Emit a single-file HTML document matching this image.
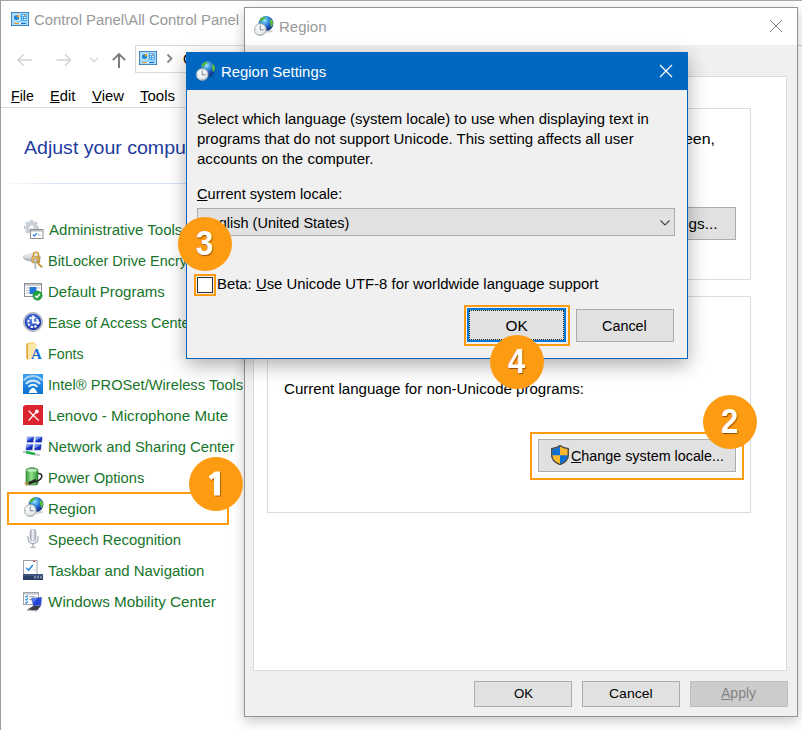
<!DOCTYPE html>
<html><head><meta charset="utf-8">
<style>
*{box-sizing:border-box;margin:0;padding:0}
html,body{width:802px;height:730px;overflow:hidden;background:#fff}
body{font-family:"Liberation Sans",sans-serif;position:relative;color:#000}
.a{position:absolute}
.t{position:absolute;white-space:pre;line-height:1;transform-origin:0 0}
.t u{text-decoration-thickness:1px;text-underline-offset:0.5px}
.layer{position:absolute;left:0;top:0;width:802px;height:730px;overflow:hidden;pointer-events:none}
.btn{position:absolute;border:1px solid #adadad;background:#e1e1e1}
.badge{position:absolute;width:54px;height:54px;border-radius:50%;background:#fd9b13;color:#fff;font-weight:bold;font-size:34.5px;text-align:center;line-height:53.2px;text-shadow:1px 1px 1px rgba(105,55,0,.75)}
.hl{position:absolute;border:2px solid #fd9b13}
.badge span{display:inline-block;transform:scaleX(.9)}
</style></head><body>
<!-- main window -->
<div class="a" style="left:0;top:0;width:802px;height:1px;background:#a6a6a6"></div>
<div class="a" style="left:0;top:0;width:1px;height:730px;background:#9c9c9c"></div>
<div class="a" style="left:1px;top:107px;width:243px;height:1px;background:#dcdcdc"></div>
<div class="a" style="left:1px;top:183px;width:243px;height:1px;background:linear-gradient(90deg,#fff 0,#d6e3f3 22%,#d6e3f3 100%)"></div>
<div class="a" style="left:135px;top:45px;width:120px;height:28px;border:1px solid #d9d9d9;background:#fff"></div>
<div class="a" style="left:790px;top:45px;width:12px;height:1px;background:#c9c9c9"></div>
<svg class="a" style="left:11px;top:12px" width="18" height="14" viewBox="0 0 18 14"><rect x=".5" y=".5" width="17" height="13" fill="#9bd6fc" stroke="#0c5ea3"/>
<rect x="1" y="1" width="16" height="12" fill="none" stroke="#c4e7fe" stroke-width=".6"/>
<circle cx="5.500" cy="5.600" r="3.400" fill="#e9f5fe"/>
<circle cx="5.500" cy="5.600" r="2.700" fill="#1e86d8"/>
<path d="M5.900 5.200V2.500A2.900 2.900 0 0 1 8.600 5.200z" fill="#f7a21b"/>
<rect x="10" y="2.300" width="5.700" height="6.500" fill="#3d9fe9"/>
<g fill="#fff"><rect x="11" y="3.200" width="3.800" height=".9"/><rect x="11" y="5.200" width="1" height=".9"/><rect x="13" y="5.200" width="1.800" height=".9"/><rect x="11" y="7.100" width="1" height=".9"/><rect x="13" y="7.100" width="1.800" height=".9"/></g>
<rect x="13" y="3.100" width="1.100" height="1.100" fill="#f47b16"/>
<rect x="3" y="11" width="5" height="1" fill="#f39a1a"/><rect x="8" y="11" width="2" height="1" fill="#fff"/><rect x="10" y="11" width="5" height="1" fill="#1669c9"/></svg>
<svg class="a" style="left:139.4px;top:51.2px" width="18" height="14" viewBox="0 0 18 14"><rect x=".5" y=".5" width="17" height="13" fill="#9bd6fc" stroke="#0c5ea3"/>
<rect x="1" y="1" width="16" height="12" fill="none" stroke="#c4e7fe" stroke-width=".6"/>
<circle cx="5.500" cy="5.600" r="3.400" fill="#e9f5fe"/>
<circle cx="5.500" cy="5.600" r="2.700" fill="#1e86d8"/>
<path d="M5.900 5.200V2.500A2.900 2.900 0 0 1 8.600 5.200z" fill="#f7a21b"/>
<rect x="10" y="2.300" width="5.700" height="6.500" fill="#3d9fe9"/>
<g fill="#fff"><rect x="11" y="3.200" width="3.800" height=".9"/><rect x="11" y="5.200" width="1" height=".9"/><rect x="13" y="5.200" width="1.800" height=".9"/><rect x="11" y="7.100" width="1" height=".9"/><rect x="13" y="7.100" width="1.800" height=".9"/></g>
<rect x="13" y="3.100" width="1.100" height="1.100" fill="#f47b16"/>
<rect x="3" y="11" width="5" height="1" fill="#f39a1a"/><rect x="8" y="11" width="2" height="1" fill="#fff"/><rect x="10" y="11" width="5" height="1" fill="#1669c9"/></svg>
<svg class="a" style="left:23.7px;top:220.2px" width="20" height="20" viewBox="0 0 20 20"><g fill="#cdd3da" stroke="#bfc6ce" stroke-width=".5"><circle cx="7.500" cy="7.500" r="5.200"/>
<g><rect x="6" y="0.300" width="3" height="3"/><rect x="6" y="11.700" width="3" height="3"/><rect x=".3" y="6" width="3" height="3"/><rect x="11.700" y="6" width="3" height="3"/>
<rect x="6" y=".3" width="3" height="3" transform="rotate(45 7.500 7.500)"/><rect x="6" y=".3" width="3" height="3" transform="rotate(135 7.500 7.500)"/><rect x="6" y=".3" width="3" height="3" transform="rotate(225 7.500 7.500)"/><rect x="6" y=".3" width="3" height="3" transform="rotate(315 7.500 7.500)"/></g></g>
<circle cx="7.500" cy="7.500" r="2.300" fill="#f3f5f7"/>
<rect x="6.500" y="9.500" width="12.500" height="9" fill="#fff" stroke="#8b8f94"/>
<rect x="7" y="10" width="11.500" height="1.600" fill="#b9bec4"/>
<path d="M9 14.500l1.400 1.500l2.400-2.900" fill="none" stroke="#2f8de4" stroke-width="1.300"/>
<rect x="13.800" y="14.300" width="3" height=".9" fill="#b0b5ba"/></svg>
<svg class="a" style="left:23.2px;top:250.5px" width="20" height="19" viewBox="0 0 20 19"><defs><linearGradient id="bl1" x1="0" y1="0" x2="0" y2="1"><stop offset="0" stop-color="#f4f5f6"/><stop offset="1" stop-color="#b4b8bc"/></linearGradient>
<linearGradient id="bl2" x1="0" y1="0" x2="1" y2="1"><stop offset="0" stop-color="#f3d37a"/><stop offset="1" stop-color="#b8862b"/></linearGradient></defs>
<ellipse cx="9" cy="6.500" rx="8.800" ry="3.400" fill="url(#bl1)" stroke="#b9bdc1" stroke-width=".5"/>
<path d="M.5 6.500c2 3 8 4 12 3.500" fill="none" stroke="#9aa0a5" stroke-width=".8"/>
<path d="M10.300 6V3.800a2.600 2.600 0 0 1 5.200 0V6" fill="none" stroke="#c89a3a" stroke-width="1.500"/>
<rect x="8.800" y="5.600" width="8" height="6.200" rx=".8" fill="url(#bl2)" stroke="#a87a25" stroke-width=".5"/>
<circle cx="12.500" cy="9.300" r="1.600" fill="#d7dadd" stroke="#8d9398" stroke-width=".5"/>
<path d="M12.400 10.500v7.500" stroke="#aeb3b8" stroke-width="1.700"/>
<path d="M14.500 10.500c.8 2.600 2.300 4.600 4.800 5.600" fill="none" stroke="#c69235" stroke-width="1.600"/></svg>
<svg class="a" style="left:24.2px;top:283px" width="19" height="17.5" viewBox="0 0 19 17.5"><rect x=".5" y=".5" width="17" height="13" fill="#fff" stroke="#8b9096"/>
<rect x="1" y="1" width="16" height="2" fill="#c9cdd2"/>
<rect x="2" y="4.500" width="3" height="1" fill="#b8bcc0"/><rect x="2" y="7" width="3" height="1" fill="#b8bcc0"/><rect x="2" y="9.500" width="3" height="1" fill="#b8bcc0"/>
<rect x="5.500" y="4" width="7" height="7" fill="#1f78d8"/>
<rect x="13" y="4.500" width="3.500" height="1" fill="#b8bcc0"/>
<circle cx="13.500" cy="12.600" r="4.600" fill="#21a33a" stroke="#17822c" stroke-width=".6"/>
<path d="M11.200 12.700l1.700 1.800l3-3.500" fill="none" stroke="#fff" stroke-width="1.500"/></svg>
<svg class="a" style="left:23.2px;top:312px" width="20" height="20" viewBox="0 0 20 20"><defs><radialGradient id="ea" cx="45%" cy="35%" r="70%"><stop offset="0" stop-color="#5f86e8"/><stop offset=".6" stop-color="#2a4fc4"/><stop offset="1" stop-color="#1a2f8f"/></radialGradient></defs>
<circle cx="10" cy="10" r="9.600" fill="#c5cad3" stroke="#8f96a3" stroke-width=".6"/>
<circle cx="10" cy="10" r="8.300" fill="url(#ea)"/>
<circle cx="10" cy="10.300" r="4.800" fill="none" stroke="#fff" stroke-width="2" stroke-dasharray="2.300 1.400"/>
<path d="M10 3.500v7h5.500" fill="none" stroke="#fff" stroke-width="1.800"/>
<path d="M14.800 8.600l2.200 1.900l-2.200 1.900z" fill="#fff"/></svg>
<svg class="a" style="left:25.8px;top:342.4px" width="18" height="19" viewBox="0 0 18 19"><path d="M.3 1.300L8 0v15L2 18z" fill="#f6d273"/>
<path d="M.3 1.300l1.700 1.500V18L.3 16.500z" fill="#e0a83a"/>
<path d="M2 2.800L10.500 1.200v13.300L2 18z" fill="#fce8a6"/>
<text x="5" y="16.800" font-family="Liberation Serif" font-weight="bold" font-size="15" fill="#1a70d6">A</text></svg>
<svg class="a" style="left:23.2px;top:374px" width="20" height="20" viewBox="0 0 20 20"><defs><linearGradient id="it" x1="0" y1="0" x2="0" y2="1"><stop offset="0" stop-color="#3a9ff0"/><stop offset="1" stop-color="#0b70cf"/></linearGradient></defs>
<rect width="20" height="20" fill="url(#it)"/>
<g fill="none" stroke="#fff" stroke-linecap="round"><path d="M1.300 5.800C5.800 .8 14.200 .8 18.700 5.800" stroke-width="2.200" opacity=".55"/><path d="M3.600 9.300C7 5.600 13 5.600 16.400 9.300" stroke-width="2.200" opacity=".8"/><path d="M6.300 12.300C8.300 10.300 11.700 10.300 13.700 12.300" stroke-width="2" opacity=".95"/></g>
<path d="M10 13.500c2 1 3.800 3 4.300 5.500h-8.600c.5-2.500 2.300-4.500 4.300-5.500z" fill="#fff"/></svg>
<svg class="a" style="left:23.2px;top:405px" width="20" height="20" viewBox="0 0 20 20"><path d="M3 0H20V20H0V3A3 3 0 0 1 3 0z" fill="#dc2431"/>
<path d="M5.600 5.800L15.800 15.600" stroke="#fff" stroke-width="1.300"/>
<path d="M5.600 15.600L12.600 7.800" stroke="#fff" stroke-width="1.300"/>
<circle cx="13.800" cy="6.500" r="1.900" fill="#fff"/></svg>
<svg class="a" style="left:23.2px;top:436px" width="20" height="20" viewBox="0 0 20 20"><defs><linearGradient id="nw" x1="0" y1="0" x2="1" y2="1"><stop offset="0" stop-color="#3a6cf0"/><stop offset=".5" stop-color="#1a38c8"/><stop offset="1" stop-color="#0a1780"/></linearGradient></defs>
<g transform="skewX(-7) translate(2.400 0)">
<g fill="url(#nw)" stroke="#e4eaf5" stroke-width=".8"><rect x="1.800" y=".4" width="7.200" height="6.400"/><rect x="10.200" y=".4" width="7.200" height="6.400"/><rect x="1.800" y="8" width="7.200" height="6.400"/><rect x="10.200" y="8" width="7.200" height="6.400"/></g>
<g fill="#a9c0ff" opacity=".6"><path d="M2.300 .9h6.200l-6.200 3.800z"/><path d="M10.700 .9h6.200l-6.200 3.800z"/><path d="M2.300 8.500h6.200l-6.200 3.800z"/><path d="M10.700 8.500h6.200l-6.200 3.800z"/></g>
</g>
<path d="M.8 15.800l15 3.300" stroke="#c5cad2" stroke-width="2.400" stroke-linecap="round"/>
<path d="M4 16.300l7 1.500" stroke="#1fb14a" stroke-width="2.600" stroke-linecap="round"/></svg>
<svg class="a" style="left:23.2px;top:466.5px" width="20" height="20" viewBox="0 0 20 20"><defs><linearGradient id="pw" x1="0" y1="0" x2="1" y2="0"><stop offset="0" stop-color="#3a9a3c"/><stop offset=".45" stop-color="#8fe08a"/><stop offset="1" stop-color="#2d8a32"/></linearGradient></defs>
<rect x="6.500" y="0" width="5" height="2" rx=".6" fill="#9aa3a0"/>
<rect x="3" y="1.500" width="12" height="16.500" rx="2" fill="url(#pw)" stroke="#2b7a30" stroke-width=".6"/>
<ellipse cx="9" cy="3.200" rx="5.400" ry="1.500" fill="#c6f3c2" opacity=".8"/>
<path d="M15 6.500c3.500-.5 5 2.500 2.500 5.500c-1.200 1.400-3 2.300-5 3" fill="none" stroke="#222" stroke-width="1.500"/>
<path d="M5 15.200l7.500-3.400l1.300 2.600l-7.500 3.600z" fill="#2a2a2a"/>
<path d="M1.300 16.500l3.800-1.500M2.300 18.600l3.800-1.600" stroke="#b98c3a" stroke-width="1.100"/></svg>
<svg class="a" style="left:24px;top:497px" width="20" height="20" viewBox="0 0 20 20"><defs><radialGradient id="gl1" cx="40%" cy="30%" r="75%"><stop offset="0" stop-color="#a6e6ff"/><stop offset=".3" stop-color="#43a3e6"/><stop offset=".65" stop-color="#1d55b8"/><stop offset="1" stop-color="#0f2a78"/></radialGradient>
<radialGradient id="ck1" cx="45%" cy="35%" r="70%"><stop offset="0" stop-color="#fff"/><stop offset=".7" stop-color="#e4e8ea"/><stop offset="1" stop-color="#aab0b4"/></radialGradient></defs>
<ellipse cx="13" cy="15.2" rx="6" ry="1.6" fill="#000" opacity=".18"/>
<circle cx="12" cy="7.4" r="7.4" fill="url(#gl1)"/>
<path d="M6.2 3.2c1.5-1.8 3.4-2.6 5-2.6c.8.9-.2 2-1.4 2.6c-1 .6-1.200 1.900-2.300 2.500c-1 .4-1.600-.3-1.900-1.200z" fill="#4fb83a"/>
<path d="M16.800 3c1.300.9 2.200 2.600 2.400 4.400c-.4 1.600-1.300 2.900-2 3.500c-.8-.9-.4-2.300-.9-3.400c-.5-1.200-.6-3.200.5-4.500z" fill="#59c03c"/>
<path d="M9 11.500c.9-.5 2.300 0 2.800.9c.3.900-.3 1.900-1 2.300c-1.200-.4-2-1.800-1.800-3.200z" fill="#3fa535"/>
<circle cx="6.200" cy="13.600" r="6" fill="url(#ck1)" stroke="#9aa0a5" stroke-width=".7"/>
<path d="M6.200 9.600v4.200h3.200" fill="none" stroke="#56627a" stroke-width=".8"/>
<g fill="#8a9096"><rect x="5.900" y="8.300" width=".6" height="1"/><rect x="5.900" y="18" width=".6" height="1"/><rect x="1" y="13.300" width="1" height=".6"/><rect x="10.600" y="13.300" width="1" height=".6"/></g></svg>
<svg class="a" style="left:27.1px;top:528.7px" width="12" height="19.5" viewBox="0 0 12 19.5"><defs><linearGradient id="sp" x1="0" y1="0" x2="1" y2="0"><stop offset="0" stop-color="#8f96a8"/><stop offset=".45" stop-color="#f5f6fa"/><stop offset="1" stop-color="#979eb0"/></linearGradient></defs>
<rect x="3" y="0" width="6" height="12.500" rx="3" fill="url(#sp)" stroke="#a9afbd" stroke-width=".5"/>
<path d="M1 7v2.500a5 5 0 0 0 10 0V7" fill="none" stroke="#9da3b1" stroke-width="1.100"/>
<path d="M6 14.500v3" stroke="#9da3b1" stroke-width="1.400"/>
<ellipse cx="6" cy="18.300" rx="3" ry=".9" fill="#b5bac6"/></svg>
<svg class="a" style="left:23.2px;top:560px" width="20" height="20" viewBox="0 0 20 20"><rect x=".5" y=".5" width="13.500" height="14" fill="#fff" stroke="#9da1a6"/>
<rect x="10" y="1" width="2.200" height="1" fill="#e0343c"/>
<path d="M3.200 7.800l2.400 2.400l4.200-5.200" fill="none" stroke="#1f82e0" stroke-width="1.500"/>
<rect x="10.300" y="9.500" width="2" height=".8" fill="#b4b8bc"/>
<rect x="0" y="14.200" width="20" height="5.800" fill="#2a3f63"/>
<rect x="0" y="14.200" width="20" height="2" fill="#3c5582"/>
<g fill="#8e9bb5"><rect x="11" y="16.300" width="2" height="2"/><rect x="14" y="16.300" width="2" height="2"/><rect x="17" y="16.300" width="2" height="2"/></g></svg>
<svg class="a" style="left:23.2px;top:591.5px" width="20" height="20" viewBox="0 0 20 20"><rect x=".5" y=".5" width="15" height="12" fill="#fff" stroke="#9ea3a8"/>
<rect x="1" y="1" width="14" height="1.600" fill="#c6cacf"/>
<g stroke="#1f82e0" stroke-width="1.100" fill="none"><path d="M2.300 4.300l1 1l1.600-2"/><path d="M2.300 7.300l1 1l1.600-2"/><path d="M2.300 10.300l1 1l1.600-2"/></g>
<g fill="#8c9196"><rect x="6.500" y="4.200" width="5" height=".9"/><rect x="6.500" y="7.200" width="3" height=".9"/></g>
<path d="M8.300 6l10.500-.8l-.8 8.500l-7.700 .3z" fill="#2446d8" stroke="#8d96b2" stroke-width=".5"/>
<path d="M8.700 6.300l6-.4l-4.500 5z" fill="#6f8df5" opacity=".7"/>
<path d="M10.200 14l7.800-.3l-3.800 4.800l-10-1z" fill="#3b3f46"/>
<path d="M4.200 17.500l10 1l-.3 1l-10-1.100z" fill="#9ea3ab"/></svg>
<svg class="a" style="left:16px;top:53px" width="18" height="14" viewBox="0 0 18 14"><path d="M16 7H2M7.500 1.500L2 7l5.500 5.500" fill="none" stroke="#d2d2d2" stroke-width="1.400"/></svg>
<svg class="a" style="left:55px;top:53px" width="18" height="14" viewBox="0 0 18 14"><path d="M1.500 7H15.500M10 1.500L15.500 7L10 12.500" fill="none" stroke="#d2d2d2" stroke-width="1.400"/></svg>
<svg class="a" style="left:89px;top:56px" width="10" height="8" viewBox="0 0 10 8"><path d="M1 1.800l4 4l4-4" fill="none" stroke="#d6d6d6" stroke-width="1.300"/></svg>
<svg class="a" style="left:111px;top:52px" width="16" height="17" viewBox="0 0 16 17"><path d="M8 16V2M1.800 8.200L8 2l6.200 6.200" fill="none" stroke="#787878" stroke-width="1.9"/></svg>
<svg class="a" style="left:166px;top:53px" width="8" height="11" viewBox="0 0 8 11"><path d="M1.500 1.500l4 4l-4 4" fill="none" stroke="#858585" stroke-width="1.8"/></svg>
<div class="t" style="left:34.3px;top:11.8px;font-size:15.4px;color:#999;transform:scaleX(0.9662)">Control Panel\All Control Panel Items</div>
<div class="t" style="left:182.7px;top:51.0px;font-size:15.4px;color:#000;transform:scaleX(0.9400)">Control Panel</div>
<div class="t" style="left:11.3px;top:87.5px;font-size:15.4px;color:#000;transform:scaleX(0.9208)"><u>F</u>ile</div>
<div class="t" style="left:50.2px;top:87.5px;font-size:15.4px;color:#000;transform:scaleX(0.9519)"><u>E</u>dit</div>
<div class="t" style="left:92.0px;top:87.5px;font-size:15.4px;color:#000;transform:scaleX(0.9636)"><u>V</u>iew</div>
<div class="t" style="left:140.0px;top:87.5px;font-size:15.4px;color:#000;transform:scaleX(0.9722)"><u>T</u>ools</div>
<div class="t" style="left:23.7px;top:138.8px;font-size:18.8px;color:#1e3c9e;transform:scaleX(1.0407)">Adjust your computer's settings</div>
<div class="t" style="left:48.6px;top:222.3px;font-size:15.4px;color:#17752b;transform:scaleX(0.9765)">Administrative Tools</div>
<div class="t" style="left:47.7px;top:253.3px;font-size:15.4px;color:#17752b;transform:scaleX(0.9400)">BitLocker Drive Encryption</div>
<div class="t" style="left:47.6px;top:284.3px;font-size:15.4px;color:#17752b;transform:scaleX(0.9754)">Default Programs</div>
<div class="t" style="left:47.7px;top:315.3px;font-size:15.4px;color:#17752b;transform:scaleX(0.9400)">Ease of Access Center</div>
<div class="t" style="left:47.7px;top:346.3px;font-size:15.4px;color:#17752b;transform:scaleX(0.9270)">Fonts</div>
<div class="t" style="left:47.6px;top:377.3px;font-size:15.4px;color:#17752b;transform:scaleX(0.9552)">Intel® PROSet/Wireless Tools</div>
<div class="t" style="left:47.6px;top:408.3px;font-size:15.4px;color:#17752b;transform:scaleX(0.9835)">Lenovo - Microphone Mute</div>
<div class="t" style="left:47.6px;top:439.3px;font-size:15.4px;color:#17752b;transform:scaleX(0.9596)">Network and Sharing Center</div>
<div class="t" style="left:47.6px;top:470.3px;font-size:15.4px;color:#17752b;transform:scaleX(0.9540)">Power Options</div>
<div class="t" style="left:47.6px;top:501.3px;font-size:15.4px;color:#17752b;transform:scaleX(0.9830)">Region</div>
<div class="t" style="left:47.6px;top:532.3px;font-size:15.4px;color:#17752b;transform:scaleX(0.9654)">Speech Recognition</div>
<div class="t" style="left:47.6px;top:563.3px;font-size:15.4px;color:#17752b;transform:scaleX(0.9725)">Taskbar and Navigation</div>
<div class="t" style="left:47.6px;top:594.3px;font-size:15.4px;color:#17752b;transform:scaleX(0.9905)">Windows Mobility Center</div>

<!-- Region dialog -->
<div class="layer">
<div class="a" style="left:244px;top:7px;width:554px;height:710px;background:#f0f0f0;border:1px solid #939393;box-shadow:0 4px 12px rgba(0,0,0,.22)"></div>
<div class="a" style="left:245px;top:8px;width:552px;height:37px;background:#fff"></div>
<div class="a" style="left:253px;top:76px;width:534px;height:595px;background:#fff;border:1px solid #dadada"></div>
<div class="a" style="left:267px;top:108px;width:484px;height:172px;border:1px solid #dcdcdc"></div>
<div class="a" style="left:267px;top:296px;width:484px;height:217px;border:1px solid #dcdcdc"></div>
<div class="btn" style="left:538px;top:207px;width:198px;height:33px"></div>
<div class="btn" style="left:538px;top:439px;width:198px;height:33px"></div>
<div class="btn" style="left:474px;top:681px;width:98px;height:26px"></div>
<div class="btn" style="left:582px;top:681px;width:98px;height:26px"></div>
<div class="btn" style="left:690px;top:681px;width:98px;height:26px;background:#ccc;border-color:#bfbfbf"></div>
<svg class="a" style="left:254px;top:16px" width="20" height="20" viewBox="0 0 20 20"><defs><radialGradient id="gl2" cx="40%" cy="30%" r="75%"><stop offset="0" stop-color="#a6e6ff"/><stop offset=".3" stop-color="#43a3e6"/><stop offset=".65" stop-color="#1d55b8"/><stop offset="1" stop-color="#0f2a78"/></radialGradient>
<radialGradient id="ck2" cx="45%" cy="35%" r="70%"><stop offset="0" stop-color="#fff"/><stop offset=".7" stop-color="#e4e8ea"/><stop offset="1" stop-color="#aab0b4"/></radialGradient></defs>
<ellipse cx="13" cy="15.2" rx="6" ry="1.6" fill="#000" opacity=".18"/>
<circle cx="12" cy="7.4" r="7.4" fill="url(#gl2)"/>
<path d="M6.2 3.2c1.5-1.8 3.4-2.6 5-2.6c.8.9-.2 2-1.4 2.6c-1 .6-1.200 1.900-2.300 2.500c-1 .4-1.600-.3-1.900-1.200z" fill="#4fb83a"/>
<path d="M16.800 3c1.300.9 2.200 2.600 2.400 4.400c-.4 1.600-1.300 2.900-2 3.500c-.8-.9-.4-2.300-.9-3.400c-.5-1.200-.6-3.200.5-4.500z" fill="#59c03c"/>
<path d="M9 11.500c.9-.5 2.300 0 2.800.9c.3.900-.3 1.900-1 2.300c-1.200-.4-2-1.800-1.800-3.200z" fill="#3fa535"/>
<circle cx="6.200" cy="13.600" r="6" fill="url(#ck2)" stroke="#9aa0a5" stroke-width=".7"/>
<path d="M6.200 9.600v4.200h3.200" fill="none" stroke="#56627a" stroke-width=".8"/>
<g fill="#8a9096"><rect x="5.900" y="8.300" width=".6" height="1"/><rect x="5.900" y="18" width=".6" height="1"/><rect x="1" y="13.300" width="1" height=".6"/><rect x="10.600" y="13.300" width="1" height=".6"/></g></svg>
<svg class="a" style="left:769px;top:19px" width="14" height="14" viewBox="0 0 14 14"><path d="M1 1l12 12M13 1L1 13" stroke="#868686" stroke-width="1"/></svg>
<svg class="a" style="left:551px;top:444.8px" width="18" height="20.2" viewBox="0 0 18 20.2"><path d="M9 .6C6.800 2.400 3.500 3.400.7 3.600V10c0 4.500 3.800 8.100 8.300 9.600c4.500-1.500 8.300-5.100 8.300-9.600V3.600C14.500 3.400 11.200 2.400 9 .6z" fill="#fdb92e" stroke="#5a5a5a" stroke-width="1"/>
<path d="M9 1.200C6.900 2.800 3.900 3.900 1.200 4.100V10.300H9z" fill="#0b6fd6"/>
<path d="M9 10.300h7.800c-.1 4-3.700 7.400-7.800 8.800z" fill="#0b6fd6"/>
<path d="M9 .6C6.800 2.400 3.500 3.400.7 3.600V10c0 4.500 3.800 8.100 8.300 9.600c4.500-1.500 8.300-5.100 8.300-9.600V3.600C14.500 3.400 11.200 2.400 9 .6z" fill="none" stroke="#4c4c4c" stroke-width="1.25"/></svg>
<div class="t" style="left:278.8px;top:18.7px;font-size:15.4px;color:#999;transform:scaleX(0.9745)">Region</div>
<div class="t" style="left:684.0px;top:131.3px;font-size:15.4px;color:#000;transform:scaleX(1.0357)">een,</div>
<div class="t" style="left:680.0px;top:216.0px;font-size:15.4px;color:#000;transform:scaleX(0.9943)">ngs...</div>
<div class="t" style="left:284.3px;top:380.7px;font-size:15.4px;color:#000;transform:scaleX(0.9793)">Current language for non-Unicode programs:</div>
<div class="t" style="left:571.2px;top:448.4px;font-size:15.4px;color:#000;transform:scaleX(0.9313)"><u>C</u>hange system locale...</div>
<div class="t" style="left:513.5px;top:687.4px;font-size:13.6px;color:#000;transform:scaleX(0.9722)">OK</div>
<div class="t" style="left:609.0px;top:687.4px;font-size:13.6px;color:#000;transform:scaleX(1.0293)">Cancel</div>
<div class="t" style="left:721.0px;top:687.2px;font-size:13.8px;color:#838383;transform:scaleX(1.0176)"><u>A</u>pply</div>
</div>

<!-- Region Settings dialog -->
<div class="layer">
<div class="a" style="left:186px;top:52px;width:502px;height:307px;background:#f0f0f0;border:1px solid #0067c0;box-shadow:0 6px 18px rgba(0,0,0,.32)"></div>
<div class="a" style="left:186px;top:52px;width:502px;height:38px;background:#0067c0"></div>
<div class="a" style="left:197px;top:208px;width:478px;height:28px;background:#e1e1e1;border:1px solid #adadad"></div>
<div class="a" style="left:197px;top:277px;width:16px;height:16px;background:#fff;border:1px solid #333"></div>
<div class="btn" style="left:467px;top:308px;width:99px;height:34px;border:2px solid #0078d7"></div>
<div class="a" style="left:469px;top:310px;width:95px;height:30px;border:1px dotted #222"></div>
<div class="btn" style="left:576px;top:309px;width:98px;height:33px"></div>
<svg class="a" style="left:196px;top:61px" width="20" height="20" viewBox="0 0 20 20"><defs><radialGradient id="gl3" cx="40%" cy="30%" r="75%"><stop offset="0" stop-color="#a6e6ff"/><stop offset=".3" stop-color="#43a3e6"/><stop offset=".65" stop-color="#1d55b8"/><stop offset="1" stop-color="#0f2a78"/></radialGradient>
<radialGradient id="ck3" cx="45%" cy="35%" r="70%"><stop offset="0" stop-color="#fff"/><stop offset=".7" stop-color="#e4e8ea"/><stop offset="1" stop-color="#aab0b4"/></radialGradient></defs>
<ellipse cx="13" cy="15.2" rx="6" ry="1.6" fill="#000" opacity=".18"/>
<circle cx="12" cy="7.4" r="7.4" fill="url(#gl3)"/>
<path d="M6.2 3.2c1.5-1.8 3.4-2.6 5-2.6c.8.9-.2 2-1.4 2.6c-1 .6-1.200 1.900-2.300 2.500c-1 .4-1.600-.3-1.900-1.200z" fill="#4fb83a"/>
<path d="M16.800 3c1.300.9 2.200 2.600 2.400 4.400c-.4 1.600-1.300 2.900-2 3.500c-.8-.9-.4-2.300-.9-3.400c-.5-1.200-.6-3.200.5-4.500z" fill="#59c03c"/>
<path d="M9 11.500c.9-.5 2.300 0 2.800.9c.3.900-.3 1.900-1 2.300c-1.200-.4-2-1.800-1.800-3.200z" fill="#3fa535"/>
<circle cx="6.200" cy="13.600" r="6" fill="url(#ck3)" stroke="#9aa0a5" stroke-width=".7"/>
<path d="M6.200 9.600v4.200h3.200" fill="none" stroke="#56627a" stroke-width=".8"/>
<g fill="#8a9096"><rect x="5.900" y="8.300" width=".6" height="1"/><rect x="5.900" y="18" width=".6" height="1"/><rect x="1" y="13.300" width="1" height=".6"/><rect x="10.600" y="13.300" width="1" height=".6"/></g></svg>
<svg class="a" style="left:659px;top:64px" width="14" height="14" viewBox="0 0 14 14"><path d="M1 1l12 12M13 1L1 13" stroke="#fff" stroke-width="1.300"/></svg>
<svg class="a" style="left:658.6px;top:219px" width="12" height="8" viewBox="0 0 12 8"><path d="M1.500 1.500l4.500 4.500l4.500-4.500" fill="none" stroke="#444" stroke-width="1.100"/></svg>
<div class="t" style="left:220.6px;top:63.6px;font-size:15.4px;color:#fff;transform:scaleX(0.9673)">Region Settings</div>
<div class="t" style="left:196.7px;top:111.2px;font-size:15.4px;color:#000;transform:scaleX(0.9673)">Select which language (system locale) to use when displaying text in</div>
<div class="t" style="left:196.7px;top:131.3px;font-size:15.4px;color:#000;transform:scaleX(0.9734)">programs that do not support Unicode. This setting affects all user</div>
<div class="t" style="left:196.7px;top:151.4px;font-size:15.4px;color:#000;transform:scaleX(0.9775)">accounts on the computer.</div>
<div class="t" style="left:196.8px;top:186.0px;font-size:15.4px;color:#000;transform:scaleX(0.9487)"><u>C</u>urrent system locale:</div>
<div class="t" style="left:201.1px;top:215.0px;font-size:15.4px;color:#000;transform:scaleX(0.9423)">English (United States)</div>
<div class="t" style="left:217.0px;top:276.0px;font-size:15.4px;color:#000;transform:scaleX(0.9669)">Beta: <u>U</u>se Unicode UTF-8 for worldwide language support</div>
<div class="t" style="left:505.5px;top:317.7px;font-size:15.4px;color:#000;transform:scaleX(1.0000)">OK</div>
<div class="t" style="left:602.1px;top:317.7px;font-size:15.4px;color:#000;transform:scaleX(0.9348)">Cancel</div>
</div>

<!-- annotations -->
<div class="layer">
<div class="hl" style="left:7px;top:492px;width:222px;height:32.5px"></div>
<div class="hl" style="left:530px;top:432px;width:214px;height:48px"></div>
<div class="hl" style="left:194px;top:273.6px;width:22px;height:22.4px"></div>
<div class="hl" style="left:464px;top:305px;width:106px;height:41px"></div>
<div class="badge" style="left:189px;top:457px"><svg class="a" style="left:0;top:0" width="54" height="54" viewBox="0 0 54 54"><path d="M31 14.400H26.200L19.600 19.500L22.200 22.900L25 20.700V38.600H31z" fill="rgba(105,55,0,.55)" transform="translate(1 1)"/><path d="M31 14.400H26.200L19.600 19.500L22.200 22.900L25 20.700V38.600H31z" fill="#fff"/></svg></div>
<div class="badge" style="left:703px;top:395px"><span>2</span></div>
<div class="badge" style="left:178px;top:217px"><span>3</span></div>
<div class="badge" style="left:490px;top:335px"><span>4</span></div>
</div>
</body></html>
